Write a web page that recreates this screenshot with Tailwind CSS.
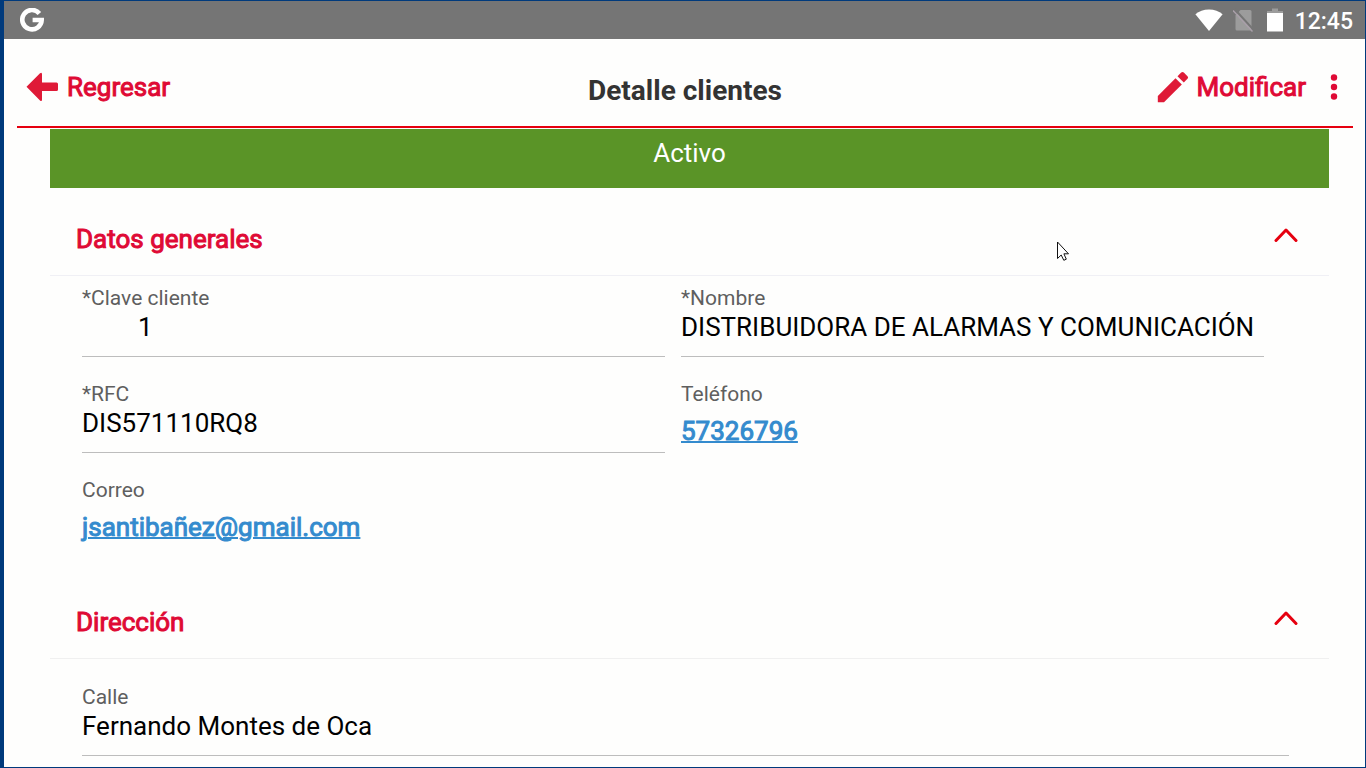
<!DOCTYPE html>
<html lang="es">
<head>
    <meta charset="UTF-8">
    <meta name="viewport" content="width=device-width, initial-scale=1.0">
    <title>Detalle clientes</title>
    <script src="https://cdn.jsdelivr.net/npm/@tailwindcss/browser@4"></script>
</head>
<body class="h-screen overflow-hidden flex flex-col bg-[#fefefd] border border-l-4 border-[#003a7c] font-['Roboto',sans-serif] text-black">

    <!-- Status bar -->
    <div class="flex items-center justify-between shrink-0 h-[38px] pl-4 pr-3 bg-[#757575] text-white">
        <svg class="size-6" viewBox="0 0 24 24" fill="none" stroke="currentColor" stroke-width="4.6">
            <path d="M19.400 5.400A9.700 9.700 0 1 0 21.700 12H12.600"/>
        </svg>
        <div class="flex items-center">
            <svg class="w-7 h-6" viewBox="0 0 28 24" fill="currentColor">
                <path d="M14 23L.4 6.200C4 3.200 8.600 1.500 14 1.500S24 3.200 27.600 6.200z"/>
            </svg>
            <svg class="w-5 h-6 ml-2.5" viewBox="0 0 20 24">
                <path d="M7.500 2H17a1.500 1.500 0 0 1 1.500 1.500V21a1.500 1.500 0 0 1-1.500 1.500H4A1.500 1.500 0 0 1 2.500 21V7.500z" fill="#9c9c9c"/>
                <path d="M1.500 1L21.500 23" stroke="#757575" stroke-width="2"/>
                <path d="M0 2.500L19.500 23.500" stroke="#a99fa9" stroke-width="1.500"/>
            </svg>
            <svg class="w-4 h-6 ml-3.5" viewBox="0 0 16 24">
                <path d="M5 .5h6V3h5v3H0V3h5z" fill="#9c9c9c"/>
                <path d="M0 5h16v18.500H0z" fill="#fff"/>
            </svg>
            <span class="ml-3 pt-0.5 text-[23px] leading-none font-medium">12:45</span>
        </div>
    </div>

    <!-- Title bar -->
    <header class="grid grid-cols-3 items-center shrink-0 h-[89px] pt-4 ml-[13px] mr-3 border-b-2 border-[#e6000f] text-[#df0a35]">
        <a href="#" class="flex items-center gap-2 pl-2 pb-2 text-[26px] leading-8 [-webkit-text-stroke:1px]">
            <svg class="w-[34px] h-8" viewBox="0 0 34 32" fill="#df1a37">
                <path d="M1.500 15.800L15 2.300Q17 .8 17 3.300V11.500H31.500Q33 11.500 33 13V18.500Q33 20 31.500 20H17V28.500Q17 31 15 29.500z"/>
            </svg>
            Regresar
        </a>
        <h1 class="text-center text-[28px] leading-8 font-bold text-[#333333]">Detalle clientes</h1>
        <div class="flex items-center justify-end gap-5 pr-[11px] pb-2">
            <a href="#" class="flex items-center gap-2 text-[26px] leading-8 [-webkit-text-stroke:1px]">
                <svg class="size-8" viewBox="0 0 32 32" fill="#df1a37">
                    <path d="M.8 31.200V25L18.500 7.200L24.800 13.500L7 31.200z"/>
                    <path d="M20.500 5.200L24.200 1.500Q25.500.3 26.800 1.500L30.500 5.200Q31.700 6.500 30.500 7.800L26.800 11.500z"/>
                </svg>
                Modificar
            </a>
            <button type="button" aria-label="Más opciones">
                <svg class="w-4 h-8" viewBox="0 0 16 32" fill="currentColor">
                    <circle cx="8" cy="6.500" r="3.200"/>
                    <circle cx="8" cy="16" r="3.200"/>
                    <circle cx="8" cy="25.500" r="3.200"/>
                </svg>
            </button>
        </div>
    </header>

    <main class="flex-1 min-h-0 overflow-hidden ml-[46px] mr-9 pt-px">
        <div class="h-[59px] pt-1.5 bg-[#5a9427] text-center text-[26px] leading-9 text-white">Activo</div>

        <section class="pt-4">
            <div class="flex items-center justify-between h-[72px] pl-[26px] pr-[31px] pb-0.5 border-b border-[#f0f0f5]">
                <h2 class="text-[26px] leading-8 text-[#df0a35] [-webkit-text-stroke:1px]">Datos generales</h2>
                <button type="button" aria-label="Contraer datos generales" class="pb-2">
                    <svg class="w-6 h-4" viewBox="0 0 24 16" fill="none" stroke="#e6000f" stroke-width="3" stroke-linecap="round" stroke-linejoin="round">
                        <path d="M2 13.500L12 3L22 13.500"/>
                    </svg>
                </button>
            </div>
            <div class="grid grid-cols-2 gap-x-4 gap-y-[25px] pt-2.5 pl-8 pr-[65px]">
                <div>
                    <label for="clave" class="block text-[21px] leading-6 text-[#5f5f5f]">*Clave cliente</label>
                    <input id="clave" type="text" value="1" readonly class="block w-full h-[47px] pl-14 pb-3 border-b border-[#bdbdbd] text-[26px] outline-none">
                </div>
                <div>
                    <label for="nombre" class="block text-[21px] leading-6 text-[#5f5f5f]">*Nombre</label>
                    <input id="nombre" type="text" value="DISTRIBUIDORA DE ALARMAS Y COMUNICACIÓN" readonly class="block w-full h-[47px] pb-3 border-b border-[#bdbdbd] text-[26px] outline-none">
                </div>
                <div>
                    <label for="rfc" class="block text-[21px] leading-6 text-[#5f5f5f]">*RFC</label>
                    <input id="rfc" type="text" value="DIS571110RQ8" readonly class="block w-full h-[47px] pb-3 border-b border-[#bdbdbd] text-[26px] outline-none">
                </div>
                <div>
                    <p class="text-[21px] leading-6 text-[#5f5f5f]">Teléfono</p>
                    <a href="tel:57326796" class="inline-block pt-[7px] text-[26px] leading-9 text-[#348bce] underline decoration-2 [-webkit-text-stroke:1px]">57326796</a>
                </div>
                <div>
                    <p class="text-[21px] leading-6 text-[#5f5f5f]">Correo</p>
                    <a href="mailto:jsantibañez@gmail.com" class="inline-block pt-[7px] text-[26px] leading-9 text-[#348bce] underline decoration-2 [-webkit-text-stroke:1px]">jsantibañez@gmail.com</a>
                </div>
            </div>
        </section>

        <section class="pt-[42px]">
            <div class="flex items-center justify-between h-[72px] pl-[26px] pr-[31px] pb-0.5 border-b border-[#f0f0f0]">
                <h2 class="text-[26px] leading-8 text-[#df0a35] [-webkit-text-stroke:1px]">Dirección</h2>
                <button type="button" aria-label="Contraer dirección" class="pb-2">
                    <svg class="w-6 h-4" viewBox="0 0 24 16" fill="none" stroke="#e6000f" stroke-width="3" stroke-linecap="round" stroke-linejoin="round">
                        <path d="M2 13.500L12 3L22 13.500"/>
                    </svg>
                </button>
            </div>
            <div class="pt-[26px] pl-8 pr-10">
                <label for="calle" class="block text-[21px] leading-6 text-[#5f5f5f]">Calle</label>
                <input id="calle" type="text" value="Fernando Montes de Oca" readonly class="block w-full h-[47px] pb-3 border-b border-[#bdbdbd] text-[26px] outline-none">
            </div>
        </section>
    </main>

    <!-- Mouse pointer -->
    <svg class="absolute left-[1057px] top-[241px] w-3 h-5" viewBox="0 0 12 20" fill="#fff" stroke="#111" stroke-width="1" aria-hidden="true">
        <path d="M.5 1V17.500L4.200 14L6.800 19.300L9.300 18.200L6.900 12.800H11.500z"/>
    </svg>
</body>
</html>
